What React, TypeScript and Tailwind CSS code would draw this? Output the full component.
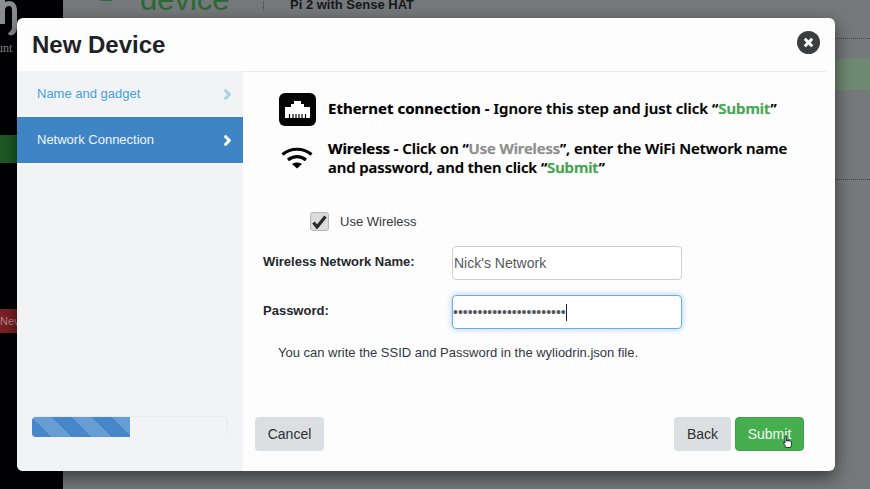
import { ChevronRight } from 'lucide-react';

const sans = 'font-["Liberation_Sans",Arial,sans-serif]';
const poster = 'font-["Noto_Sans",sans-serif] font-bold text-black [text-shadow:0_0_1px_rgba(0,0,0,0.35)]';

const Green = ({ children }: { children: string }) => (
    <span className="text-[#3aab4a]">{children}</span>
);

const Backdrop = () => (
    <div className="relative flex h-[489px] w-[870px] overflow-hidden bg-[#76797b]">
        <aside className="flex w-[63px] shrink-0 flex-col overflow-hidden bg-[#020205]">
            <svg width="24" height="36" viewBox="0 0 24 36" className="h-[36px] shrink-0" fill="none" stroke="#8b8d8e" strokeWidth="5">
                <path d="M2.500 0V24" />
                <path d="M2.500 9C4 2 14.500 1 14.500 10V27c0 5-3 7-5 5" />
            </svg>
            <div className='-ml-[3px] h-[99px] pt-[5px] font-["Liberation_Serif",serif] text-[12px] leading-[14px] text-[#8a8a8a]'>unt</div>
            <div className="h-[28px] bg-[#1d5a25]" />
            <div className="mt-[146px] h-[24px] bg-[#7c2024] text-[11px] leading-[24px] text-[#b98a8a]">Nev</div>
        </aside>
        <main className="min-w-0 flex-1">
            <div className="flex h-[39px] border-b border-dotted border-[#3f4143]">
                <div className={`-mt-[22px] w-[200px] pl-[77px] text-[31px] leading-[44px] text-[#2c6a33] ${sans}`}>device</div>
                <div className={`-mt-[5px] h-[15px] border-l border-dotted border-[#3f4143] pl-[26px] text-[13px] font-bold text-[#16181a] ${sans}`}>Pi 2 with Sense HAT</div>
            </div>
            <div className="mt-[20px] h-[31px] bg-[#6f8a72]" />
            <div className="mt-[89px] border-b border-dotted border-[#3f4143]" />
        </main>
        <div className="absolute left-[100px] top-0 h-px w-[12px] rounded-b-full bg-[#2c6a33]" />
    </div>
);

const StepItem = ({ label, active }: { label: string; active?: boolean }) => (
    <div className={`flex h-[46px] items-center justify-between pl-[20px] pr-[8px] text-[13px] ${active ? 'bg-[#3f85c5] text-[#eef5fb]' : 'text-[#46a0dc]'}`}>
        <span>{label}</span>
        <ChevronRight className={`h-[15px] w-[15px] ${active ? 'text-white' : 'text-[#a5d3ee]'}`} strokeWidth={5} />
    </div>
);

const EthernetIcon = () => (
    <svg width="37" height="33" viewBox="0 0 37 33" className="shrink-0">
        <rect width="37" height="33" rx="6" fill="#050505" />
        <path d="M6 25V14h6v-3h3V8h7v3h3v3h6v11z" fill="#fff" />
        <path d="M10.500 21v4M14 21v4M17 21v4M20 21v4M23 21v4M26.500 21v4" stroke="#050505" strokeWidth="1.200" />
    </svg>
);

const WifiIcon = () => (
    <svg width="32" height="22" viewBox="0 0 32 22" className="shrink-0" fill="none" stroke="#050505" strokeWidth="3.200">
        <path d="M1.500 7.500C9.500 .5 22.500 .5 30.500 7.500" />
        <path d="M7 13c5.500-4.500 12.500-4.500 18 0" />
        <path d="M16 21.500l-5-4.500c3-2 7-2 10 0z" fill="#050505" stroke="none" />
    </svg>
);

const HandCursor = () => (
    <svg width="9" height="13" viewBox="0 0 9 13" className="absolute left-[783px] top-[435px]">
        <path d="M2 1h1.500v5h1V5h1v1h1V6h1l1 1v3l-1 2.500H3L.5 8 1 7l1 1z" fill="#fff" stroke="#111" strokeWidth="0.800" />
    </svg>
);

const FieldRow = ({ label, focus, children }: { label: string; focus?: boolean; children: React.ReactNode }) => (
    <div className="flex items-center">
        <label className="w-[189px] pb-[1px] text-[13px] font-bold text-[#23272b]">{label}</label>
        <div className={`flex h-[34px] w-[230px] items-center rounded-[4px] border bg-white pt-[2px] text-[14px] text-[#555a60] ${focus ? 'border-[#66afe9] shadow-[0_0_6px_rgba(102,175,233,0.6)]' : 'border-[#cfcfcf] pl-[1px]'}`}>
            {children}
        </div>
    </div>
);

const App = () => {
    return (
        <div className={`relative h-[489px] w-[870px] overflow-hidden ${sans}`}>
            <Backdrop />
            <div className="absolute left-[17px] top-[18px] flex h-[453px] w-[818px] flex-col overflow-hidden rounded-[6px] bg-[#fdfdfd] shadow-[0_6px_18px_rgba(0,0,0,0.55)]">
                <header className="relative flex h-[53px] shrink-0 items-center pl-[15px]">
                    <h1 className="text-[24px] font-bold leading-none text-[#1f2329]">New Device</h1>
                    <button className="absolute left-[780px] top-[13px] flex h-[23px] w-[23px] items-center justify-center rounded-full bg-[#3b3d3f]" aria-label="Close">
                        <svg width="11" height="11" viewBox="0 0 11 11"><path d="M1.800 1.800l7.400 7.400M9.200 1.800L1.800 9.200" stroke="#fff" strokeWidth="3" /></svg>
                    </button>
                    <div className="absolute bottom-[-1px] left-[226px] right-[9px] z-10 h-px bg-[#e6ecee]" />
                </header>
                <div className="flex min-h-0 flex-1">
                    <aside className="flex w-[226px] shrink-0 flex-col justify-between bg-[#f1f3f5] pb-[35px]">
                        <div>
                            <StepItem label="Name and gadget" />
                            <StepItem label="Network Connection" active />
                        </div>
                        <div className="mx-[15px] h-[20px] rounded-[4px] border-r border-t border-[#e7e9eb]">
                            <div className="h-[20px] w-[98px] rounded-l-[4px] bg-[#4587c8] bg-[linear-gradient(45deg,rgba(255,255,255,0.18)_25%,transparent_25%,transparent_50%,rgba(255,255,255,0.18)_50%,rgba(255,255,255,0.18)_75%,transparent_75%,transparent)] bg-[length:40px_40px]" />
                        </div>
                    </aside>
                    <section className="flex min-w-0 flex-1 flex-col justify-between pb-[20px] pl-[12px] pr-[31px]">
                        <div>
                            <div className={`ml-[24px] mt-[22px] flex flex-col gap-[13px] text-[15px] leading-[19px] ${poster}`}>
                                <div className="flex items-center gap-[12px]">
                                    <EthernetIcon />
                                    <p className="-mt-[2px] whitespace-nowrap">Ethernet connection - <span className="font-semibold">Ignore this step and just click “<Green>Submit</Green>”</span></p>
                                </div>
                                <div className="flex items-center gap-[15px] pl-[2px]">
                                    <WifiIcon />
                                    <p className="whitespace-nowrap tracking-[-0.1px]">Wireless - <span className="font-semibold">Click on “<span className="text-[#8f8f8f]">Use Wireless</span>”, enter the WiFi Network name<br />and password, and then click “<Green>Submit</Green>”</span></p>
                                </div>
                            </div>
                            <div className="ml-[55px] mt-[35px] flex items-center gap-[11px] text-[13px] text-[#33383d]">
                                <span className="flex h-[19px] w-[19px] items-center justify-center rounded-[3px] border border-[#b5b5b5] bg-[#dcdcdc]">
                                    <svg width="15" height="14" viewBox="0 0 15 14"><path d="M1.500 7.500l3.500 4.500L13.500 1.500" fill="none" stroke="#2b2b2b" strokeWidth="3.200" /></svg>
                                </span>
                                <span>Use Wireless</span>
                            </div>
                            <div className="ml-[8px] mt-[14px] flex flex-col gap-[15px]">
                                <FieldRow label="Wireless Network Name:">Nick's Network</FieldRow>
                                <FieldRow label="Password:" focus>
                                    <span className="text-[14px]">•••••••••••••••••••••••</span>
                                    <span className="h-[17px] w-px bg-[#222]" />
                                </FieldRow>
                            </div>
                            <p className="ml-[23px] mt-[14px] text-[13px] text-[#33383d]">You can write the SSID and Password in the wyliodrin.json file.</p>
                        </div>
                        <div className="flex items-center justify-between text-[14px]">
                            <button className="h-[34px] w-[69px] rounded-[4px] bg-[#dcdfe1] text-[#2b3036]">Cancel</button>
                            <div className="flex gap-[4px]">
                                <button className="h-[34px] w-[57px] rounded-[4px] bg-[#dcdfe1] text-[#2b3036]">Back</button>
                                <button className="h-[34px] w-[69px] rounded-[4px] border border-[#3fa14a] bg-[#47ae50] text-[#f1f9f1]">Submit</button>
                            </div>
                        </div>
                    </section>
                </div>
            </div>
            <HandCursor />
        </div>
    );
};

export default App;
